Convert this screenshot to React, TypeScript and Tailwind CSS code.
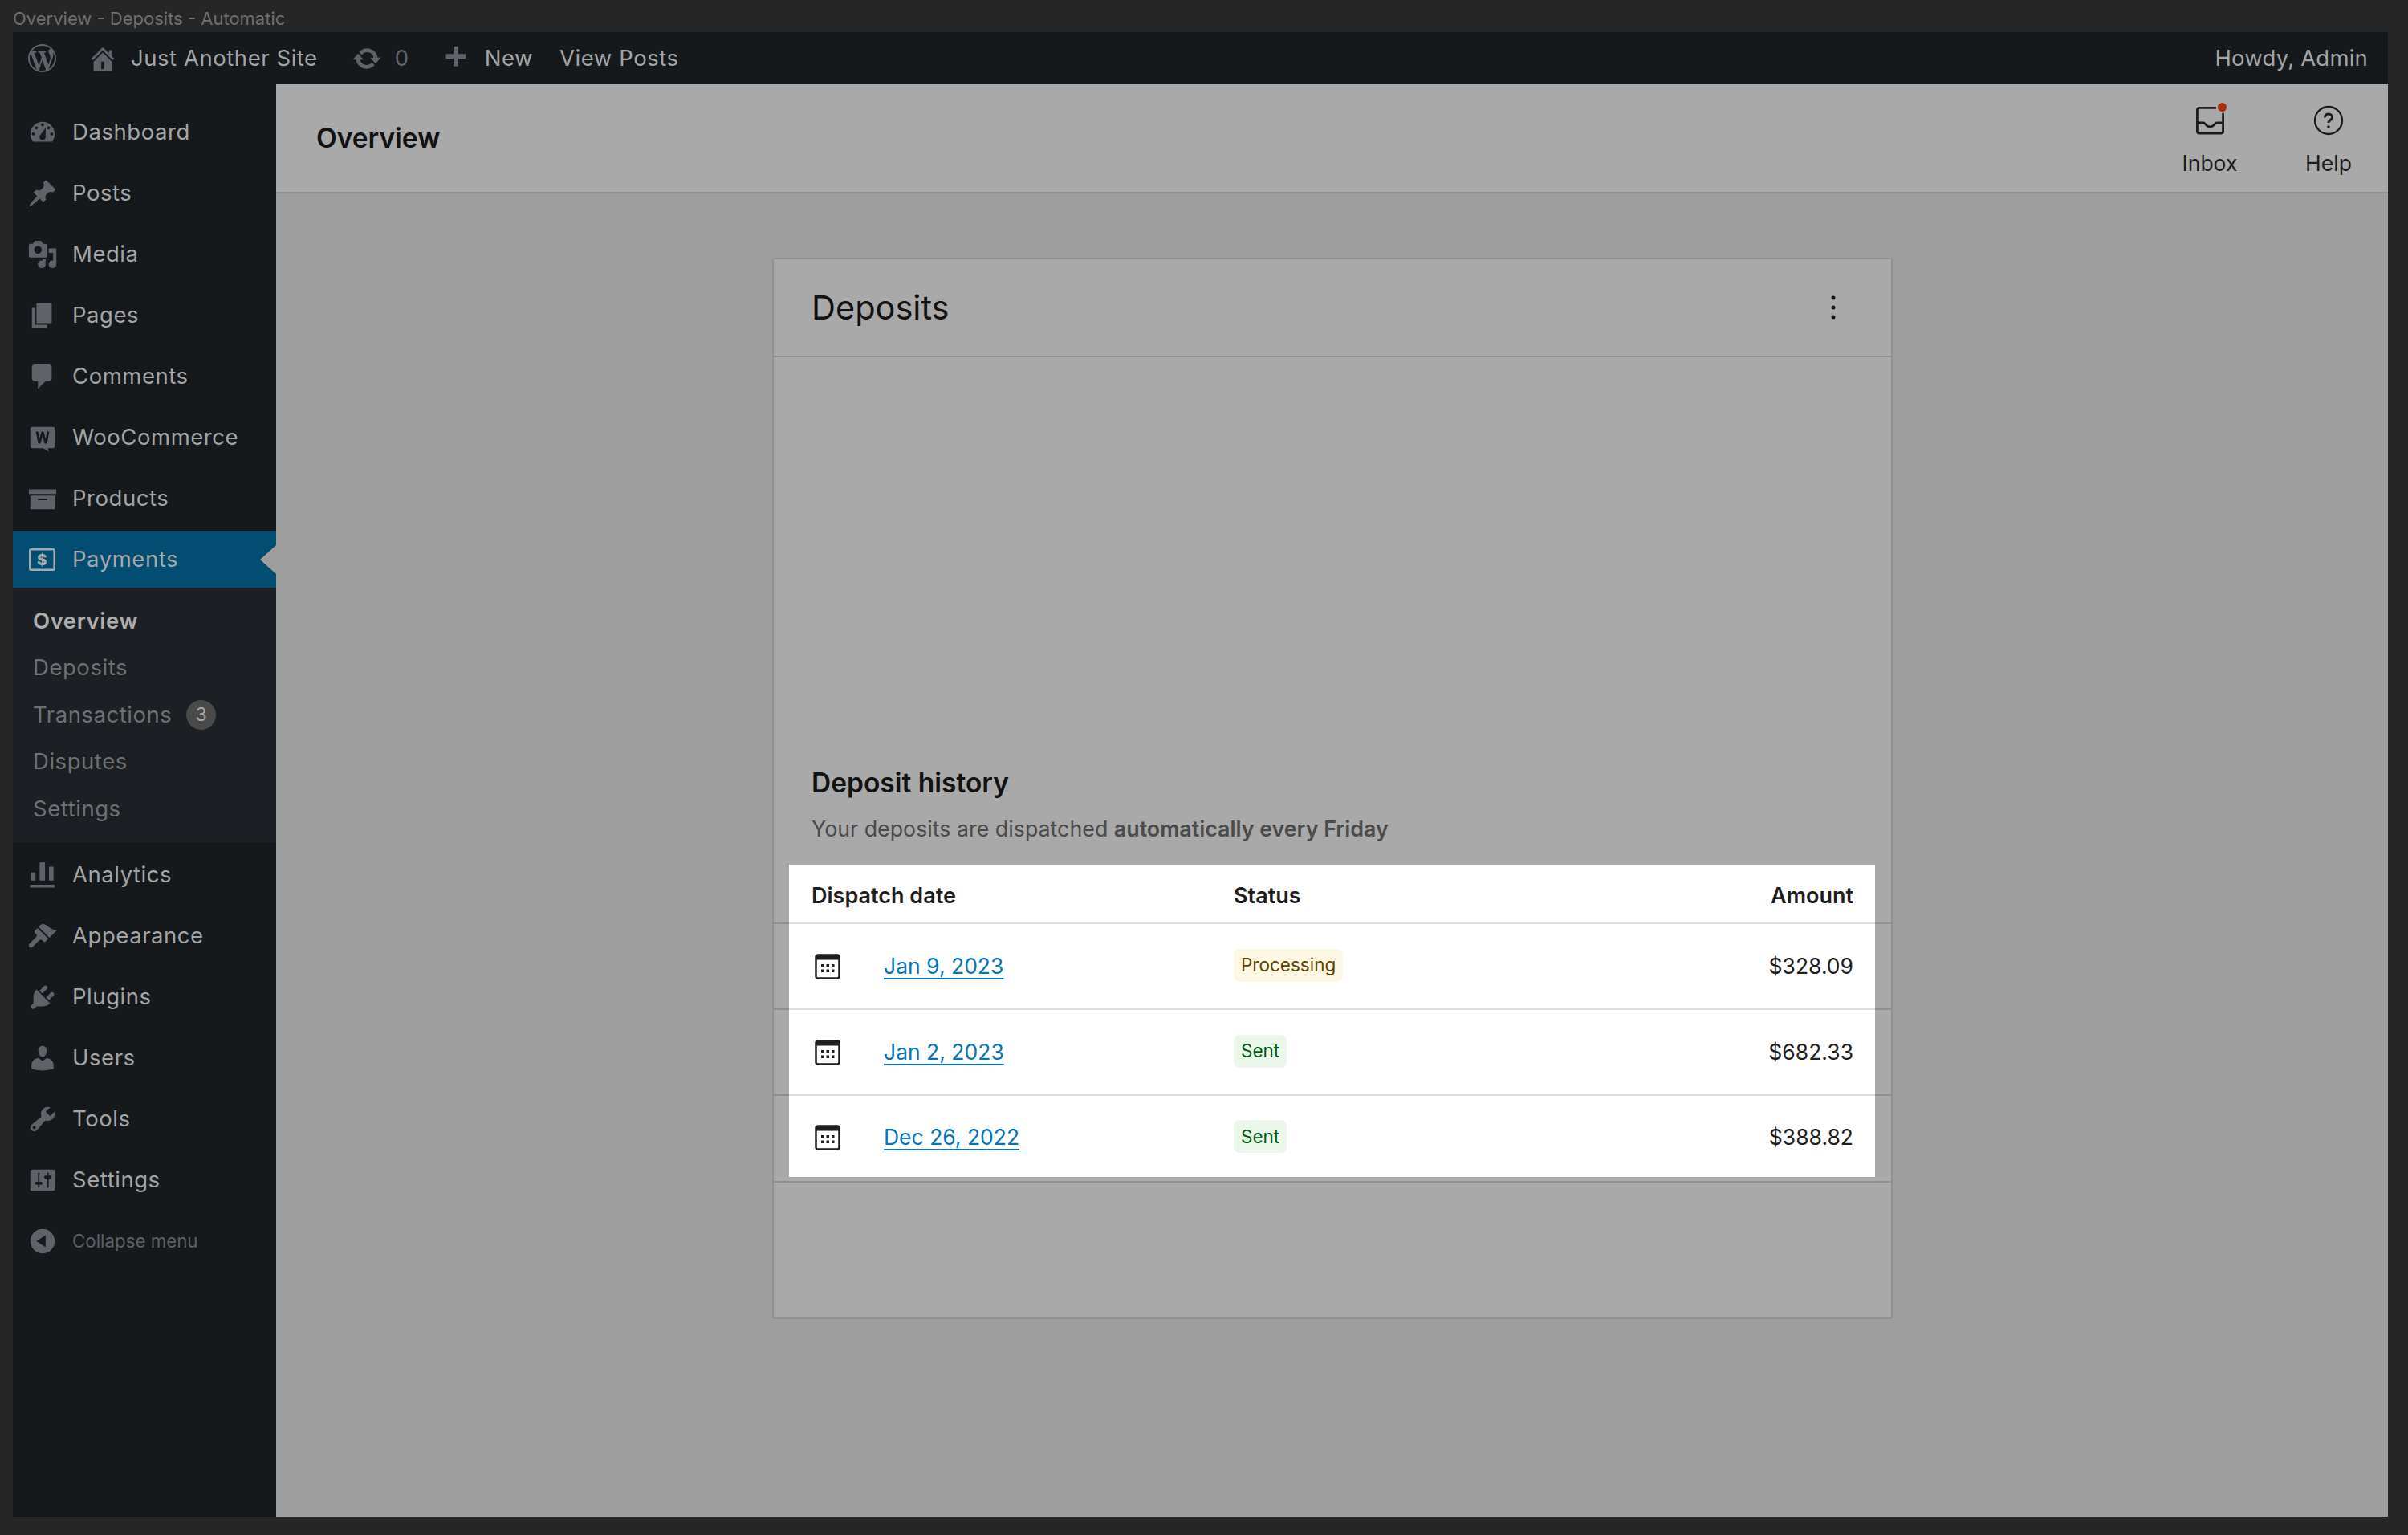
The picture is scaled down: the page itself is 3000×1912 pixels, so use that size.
// WooCommerce Payments · Deposits overview with dimmed wp-admin and spotlighted table
import type { ReactNode } from 'react';

function Dash({ d, className = 'w-[38px] h-[38px]' }: { d: string; className?: string }) {
  return (
    <svg viewBox="0 0 20 20" className={className} fill="currentColor">
      <path d={d} fillRule="evenodd" />
    </svg>
  );
}

const ICONS = {
  wp: 'M20 10c0-5.51-4.49-10-10-10C4.48 0 0 4.49 0 10c0 5.52 4.48 10 10 10 5.51 0 10-4.48 10-10zM7.78 15.37L4.37 6.22c.55-.02 1.17-.08 1.17-.08.5-.06.44-1.13-.06-1.11 0 0-1.45.11-2.37.11-.18 0-.37 0-.58-.01C4.12 2.69 6.87 1.11 10 1.11c2.33 0 4.45.87 6.05 2.34-.68-.11-1.65.39-1.65 1.58 0 .74.45 1.36.9 2.1.35.61.55 1.36.55 2.46 0 1.49-1.4 5-1.4 5l-3.03-8.37c.54-.02.82-.17.82-.17.5-.05.44-1.25-.06-1.22 0 0-1.44.12-2.38.12-.87 0-2.33-.12-2.33-.12-.5-.03-.56 1.2-.06 1.22l.92.08 1.26 3.41zM17.41 10c.24-.64.74-1.87.43-4.25.7 1.29 1.05 2.71 1.05 4.25 0 3.29-1.73 6.24-4.4 7.78.97-2.59 1.94-5.2 2.92-7.78zM6.1 18.09C3.12 16.65 1.11 13.53 1.11 10c0-1.3.23-2.48.72-3.59C3.25 10.3 4.67 14.2 6.1 18.09zm4.03-6.63l2.58 6.98c-.86.29-1.76.45-2.71.45-.79 0-1.57-.11-2.29-.33.81-2.38 1.62-4.74 2.42-7.1z',
  home: 'M16 8.5l1.53 1.53-1.06 1.06L10 4.62l-6.47 6.47-1.06-1.06L10 2.5l4 4v-2h2v4zm-6-2.46l6 5.99V18H4v-5.97zM11 17v-5H9v5h2z',
  update: 'M10.2 3.28c3.53 0 6.43 2.61 6.92 6h2.08l-3.5 4-3.5-4h2.32c-.45-1.97-2.21-3.45-4.32-3.45-1.45 0-2.73.71-3.54 1.78L4.95 5.66C6.23 4.2 8.11 3.28 10.2 3.28zm-.4 13.44c-3.52 0-6.43-2.61-6.92-6H.8l3.5-4c1.17 1.33 2.33 2.67 3.5 4H5.48c.45 1.97 2.21 3.45 4.32 3.45 1.45 0 2.73-.71 3.54-1.78l1.71 1.95c-1.28 1.46-3.15 2.38-5.25 2.38z',
  plus: 'M17 7v3h-5v5H9v-5H4V7h5V2h3v5h5z',
  dashboard: 'M3.76 16h12.48c1.1-1.37 1.76-3.11 1.76-5 0-4.42-3.58-8-8-8s-8 3.58-8 8c0 1.89.66 3.63 1.76 5zM10 4c.55 0 1 .45 1 1s-.45 1-1 1-1-.45-1-1 .45-1 1-1zM6 6c.55 0 1 .45 1 1s-.45 1-1 1-1-.45-1-1 .45-1 1-1zm8 0c.55 0 1 .45 1 1s-.45 1-1 1-1-.45-1-1 .45-1 1-1zm-5.37 5.55L12 7v6c0 1.1-.9 2-2 2s-2-.9-2-2c0-.57.24-1.08.63-1.45zM4 10c.55 0 1 .45 1 1s-.45 1-1 1-1-.45-1-1 .45-1 1-1zm12 0c.55 0 1 .45 1 1s-.45 1-1 1-1-.45-1-1 .45-1 1-1z',
  post: 'M10.44 3.02l1.82-1.82 6.36 6.35-1.83 1.82c-1.05-.68-2.48-.57-3.41.36l-.75.75c-.92.93-1.04 2.35-.35 3.41l-1.83 1.82-2.41-2.41-2.8 2.79c-.42.42-3.38 2.71-3.8 2.29s1.86-3.39 2.28-3.81l2.79-2.79L4.1 9.36l1.83-1.82c1.05.69 2.48.57 3.4-.36l.75-.75c.93-.92 1.05-2.35.36-3.41z',
  media: 'M13 11V4c0-.55-.45-1-1-1h-1.67L9 1H5L3.67 3H2c-.55 0-1 .45-1 1v7c0 .55.45 1 1 1h10c.55 0 1-.45 1-1zM7 4.5c1.38 0 2.5 1.12 2.5 2.5S8.38 9.5 7 9.5 4.5 8.38 4.5 7 5.62 4.5 7 4.5zM14 6h5v10.5c0 1.38-1.12 2.5-2.5 2.5S14 17.88 14 16.5s1.12-2.5 2.5-2.5c.17 0 .34.02.5.05V9h-3V6zm-4 8.05V13h2v3.5c0 1.38-1.12 2.5-2.5 2.5S7 17.88 7 16.5 8.12 14 9.5 14c.17 0 .34.02.5.05z',
  page: 'M6 15V2h10v13H6zm-1 1h8v2H3V5h2v11z',
  comments: 'M5 2h9c1.1 0 2 .9 2 2v7c0 1.1-.9 2-2 2h-2l-5 5v-5H5c-1.1 0-2-.9-2-2V4c0-1.1.9-2 2-2z',
  products: 'M19 4v3H1V4h18zM2 8h16v9H2V8zm5 2v1h6v-1H7z',
  appearance: 'M14.48 11.06L7.41 3.99l1.5-1.5c.5-.56 2.3-.47 3.51.32 1.21.8 1.43 1.28 2.91 2.1 1.18.64 2.45 1.26 4.45.85zm-.71.71L6.7 4.7 4.93 6.47c-.39.39-.39 1.02 0 1.41l1.06 1.06c.39.39.39 1.03 0 1.42l-4.6 4.6c-.59.59-.59 1.54 0 2.12.58.59 1.53.59 2.12 0l4.6-4.6c.39-.39 1.03-.39 1.42 0l1.06 1.06c.39.39 1.02.39 1.41 0z',
  plugins: 'M13.11 4.36L9.87 7.6 8 5.73l3.24-3.24c.35-.34 1.05-.2 1.56.32.52.51.66 1.21.31 1.55zm-8 1.77l.91-1.12 9.01 9.01-1.19.84c-.71.71-2.63 1.16-3.82 1.16H6.14L4.9 17.26c-.59.59-1.54.59-2.12 0-.59-.58-.59-1.53 0-2.12l1.24-1.24v-3.88c0-1.13.4-3.19 1.09-3.89zm7.26 3.97l3.24-3.24c.34-.35 1.04-.21 1.55.31.52.51.66 1.21.31 1.55l-3.24 3.25z',
  users: 'M10 9.25c-2.27 0-2.73-3.44-2.73-3.44C7 4.02 7.82 2 9.97 2c2.16 0 2.98 2.02 2.71 3.81 0 0-.41 3.44-2.68 3.44zm0 2.57L12.72 10c2.39 0 4.52 2.33 4.52 4.53v2.49s-3.65 1.13-7.24 1.13c-3.65 0-7.24-1.13-7.24-1.13v-2.49c0-2.25 1.94-4.48 4.47-4.48z',
  tools: 'M16.68 9.77c-1.34 1.34-3.3 1.67-4.95.99l-5.41 6.52c-.99.99-2.59.99-3.58 0s-.99-2.59 0-3.57l6.52-5.42c-.68-1.65-.35-3.61.99-4.95 1.28-1.28 3.12-1.62 4.72-1.06l-2.89 2.89 2.82 2.82 2.86-2.87c.53 1.58.18 3.39-1.08 4.65zM3.81 16.21c.4.39 1.04.39 1.43 0 .4-.4.4-1.04 0-1.43-.39-.4-1.03-.4-1.43 0-.39.39-.39 1.03 0 1.43z',
  settings: 'M18 16V4c0-.55-.45-1-1-1H3c-.55 0-1 .45-1 1v12c0 .55.45 1 1 1h14c.55 0 1-.45 1-1zM8 11h1c.55 0 1 .45 1 1s-.45 1-1 1H8v1.5c0 .28-.22.5-.5.5s-.5-.22-.5-.5V13H6c-.55 0-1-.45-1-1s.45-1 1-1h1V5.5c0-.28.22-.5.5-.5s.5.22.5.5V11zm5-2h-1c-.55 0-1-.45-1-1s.45-1 1-1h1V5.5c0-.28.22-.5.5-.5s.5.22.5.5V7h1c.55 0 1 .45 1 1s-.45 1-1 1h-1v5.5c0 .28-.22.5-.5.5s-.5-.22-.5-.5V9z',
  analytics: 'M2.600 8.300h2.800v5.300H2.600V8.300zM8.100 1.700h3.500v11.900H8.100V1.700zM14.200 4.500h3v9.100h-3V4.500zM1.900 16.300h16v1.800h-16v-1.800z',
  collapse: 'M10 2a8 8 0 1 1 0 16 8 8 0 0 1 0-16zm2 4l-6 4 6 4V6z',
  woo: 'M3.500 3h13A1.500 1.500 0 0 1 18 4.500v11a1.500 1.500 0 0 1-1.500 1.500h-3l.6 2.200L10.500 17h-7A1.500 1.500 0 0 1 2 15.500v-11A1.500 1.500 0 0 1 3.500 3zM5.600 6l1.500 8h1.500L10 9l1.400 5h1.500l1.500-8h-1.500l-.8 5-1.400-5H9.300L7.900 11l-.8-5H5.600z',
};

const TOP_MENU: [string, string][] = [
  ['Dashboard', ICONS.dashboard],
  ['Posts', ICONS.post],
  ['Media', ICONS.media],
  ['Pages', ICONS.page],
  ['Comments', ICONS.comments],
  ['WooCommerce', ICONS.woo],
  ['Products', ICONS.products],
];

const BOTTOM_MENU: [string, string][] = [
  ['Analytics', ICONS.analytics],
  ['Appearance', ICONS.appearance],
  ['Plugins', ICONS.plugins],
  ['Users', ICONS.users],
  ['Tools', ICONS.tools],
  ['Settings', ICONS.settings],
];

function MenuRow({ label, icon }: { label: string; icon: string }) {
  return (
    <div className="flex h-[76px] items-center pl-[18px] text-[27.5px] tracking-[0.55px] text-[#a3a4a6]">
      <span className="w-[56px] shrink-0 text-[#5f6369]">
        <Dash d={icon} />
      </span>
      {label}
    </div>
  );
}

function SubRow({ children, strong }: { children: ReactNode; strong?: boolean }) {
  return (
    <div
      className={`flex h-[58.5px] items-center pl-[25px] text-[27.5px] tracking-[0.55px] ${
        strong ? 'font-semibold text-[#adadad]' : 'text-[#6d7073]'
      }`}
    >
      {children}
    </div>
  );
}

function Sidebar() {
  return (
    <aside className="w-[328px] shrink-0 bg-[#16191c] pt-[22px]">
      {TOP_MENU.map(([label, icon]) => (
        <MenuRow key={label} label={label} icon={icon} />
      ))}
      <div className="relative mt-[3px] flex h-[70px] items-center bg-[#024d71] pl-[20px] text-[27.5px] tracking-[0.55px] text-[#a3a9ad]">
        <span className="w-[54px] shrink-0">
          <svg viewBox="0 0 33 28" className="h-[28px] w-[33px]" fill="none">
            <rect x="1.300" y="1.300" width="30.400" height="25.400" rx="1.500" stroke="currentColor" strokeWidth="2.600" />
            <text x="16.500" y="20.500" textAnchor="middle" fontSize="19" fontWeight="800" fill="currentColor">
              $
            </text>
          </svg>
        </span>
        Payments
        <span className="absolute right-0 top-[17px] border-y-[18px] border-r-[20px] border-y-transparent border-r-[#9e9e9e]" />
      </div>
      <div className="h-[317px] bg-[#1c2024] pt-[12px]">
        <SubRow strong>Overview</SubRow>
        <SubRow>Deposits</SubRow>
        <SubRow>
          Transactions
          <span className="ml-[18px] flex h-[37px] w-[37px] items-center justify-center rounded-full bg-[#4a4a4a] text-[23px] text-[#a9a9a9]">
            3
          </span>
        </SubRow>
        <SubRow>Disputes</SubRow>
        <SubRow>Settings</SubRow>
      </div>
      <div className="pt-[3px]">
        {BOTTOM_MENU.map(([label, icon]) => (
          <MenuRow key={label} label={label} icon={icon} />
        ))}
        <div className="flex h-[76px] items-center pl-[18px] text-[22.3px] text-[#5c6064]">
          <span className="w-[56px] shrink-0 text-[#5f6369]">
            <Dash d={ICONS.collapse} />
          </span>
          Collapse menu
        </div>
      </div>
    </aside>
  );
}

function AdminBar() {
  return (
    <header className="flex h-[65px] shrink-0 items-center bg-[#16191c] text-[27.5px] tracking-[0.55px] text-[#a3a4a6]">
      <span className="ml-[19px] w-[74px] text-[#5f6369]">
        <Dash d={ICONS.wp} className="h-[35px] w-[35px]" />
      </span>
      <span className="mr-[16px] text-[#5f6369]">
        <Dash d={ICONS.home} />
      </span>
      <span>Just Another Site</span>
      <span className="ml-[42px] text-[#5f6369]">
        <Dash d={ICONS.update} />
      </span>
      <span className="ml-[16px] text-[#5f6369]">0</span>
      <span className="ml-[38px] text-[#5f6369]">
        <Dash d={ICONS.plus} />
      </span>
      <span className="ml-[18px]">New</span>
      <span className="ml-[33px]">View Posts</span>
      <span className="ml-auto mr-[25px] tracking-[0.2px]">Howdy, Admin</span>
    </header>
  );
}

function PageHeader() {
  return (
    <div className="flex h-[136px] shrink-0 items-center border-b-2 border-[#919191] bg-[#a9a9a9] pl-[50px] text-[#1c1c1c]">
      <h1 className="text-[33.5px] font-semibold text-[#121212]">Overview</h1>
      <div className="ml-auto flex self-start">
        <div className="flex w-[148px] flex-col items-center text-[26.5px]">
          <span className="relative mt-[26px] h-[38px] w-[38px]">
            <svg viewBox="0 0 38 38" className="h-[38px] w-[38px]" fill="none" stroke="currentColor" strokeWidth="2.800">
              <path d="M26 3.400H6a2.600 2.600 0 0 0-2.600 2.600v26.400a2.600 2.600 0 0 0 2.600 2.600h27a2.600 2.600 0 0 0 2.600-2.600V11" strokeLinecap="round" />
              <path d="M3.400 22h8c2 0 3 5 8 5s6-5 8-5h8" />
            </svg>
            <span className="absolute left-[28.5px] top-[-3.5px] h-[11px] w-[11px] rounded-full bg-[#a8300d]" />
          </span>
          <span className="mt-[18px] leading-[32px]">Inbox</span>
        </div>
        <div className="flex w-[148px] flex-col items-center text-[26.5px]">
          <svg viewBox="0 0 38 38" className="mt-[26px] h-[38px] w-[38px]" fill="none" stroke="currentColor" strokeWidth="2.400">
            <circle cx="19" cy="19" r="17" />
            <path d="M14.500 15.500c0-3 2-4.500 4.500-4.500s4.500 1.700 4.500 4.200c0 3.300-4.500 3.300-4.500 6.800" strokeWidth="3" />
            <circle cx="19" cy="27" r="1.800" fill="currentColor" stroke="none" />
          </svg>
          <span className="mt-[18px] leading-[32px]">Help</span>
        </div>
      </div>
    </div>
  );
}

function CalendarIcon() {
  return (
    <svg viewBox="0 0 32 32" className="ml-[4px] h-[32px] w-[32px]">
      <rect x="1.500" y="1.500" width="29" height="29" rx="2.500" fill="none" stroke="#1e1e1e" strokeWidth="2.500" />
      <rect x="1.500" y="1.500" width="29" height="6" fill="#1e1e1e" />
      {[8, 14.500, 21].map((x) =>
        [13, 19.500].map((y) => <rect key={`${x}-${y}`} x={x} y={y} width="3.500" height="3.500" fill="#1e1e1e" />),
      )}
    </svg>
  );
}

interface Deposit {
  date: string;
  status: 'Processing' | 'Sent';
  amount: string;
}

const DEPOSITS: Deposit[] = [
  { date: 'Jan 9, 2023', status: 'Processing', amount: '$328.09' },
  { date: 'Jan 2, 2023', status: 'Sent', amount: '$682.33' },
  { date: 'Dec 26, 2022', status: 'Sent', amount: '$388.82' },
];

// 左右两条灰边 + 中间白色高亮区
function TableLine({ children, className }: { children: ReactNode; className: string }) {
  return (
    <div className="flex">
      <div className="w-[19px] border-b-2 border-[#919191]" />
      <div className={`grid flex-1 grid-cols-[526px_1fr_auto] items-center border-b-2 border-[#dcdcdc] bg-white pl-[28px] pr-[27px] ${className}`}>
        {children}
      </div>
      <div className="w-[20px] border-b-2 border-[#919191]" />
    </div>
  );
}

function DepositRow({ deposit }: { deposit: Deposit }) {
  const badge = deposit.status === 'Processing' ? 'bg-[#fdf7e3] text-[#5c4400]' : 'bg-[#ecf7ec] text-[#005c12]';
  return (
    <>
      <div className="flex items-center">
        <CalendarIcon />
        <a className="ml-[54px] text-[26.5px] text-[#0675b8] underline decoration-2 underline-offset-[5px]">{deposit.date}</a>
      </div>
      <div className="mb-[3px]">
        <span className={`inline-flex h-[41px] items-center rounded-[7px] px-[9px] text-[22.5px] ${badge}`}>{deposit.status}</span>
      </div>
      <div className="text-[26.5px] text-[#1e1e1e]">{deposit.amount}</div>
    </>
  );
}

function DepositsCard() {
  return (
    <section className="ml-[618px] h-[1322px] w-[1396px] rounded-[3px] border-2 border-[#919191] bg-[#a9a9a9]">
      <div className="flex h-[122px] items-center justify-between border-b-2 border-[#919191] pl-[47px] pr-[69px]">
        <h2 className="text-[41.5px] text-[#121212]">Deposits</h2>
        <svg viewBox="0 0 6 30" className="h-[30px] w-[6px]" fill="#121212">
          <circle cx="3" cy="3" r="2.500" />
          <circle cx="3" cy="15" r="2.500" />
          <circle cx="3" cy="27" r="2.500" />
        </svg>
      </div>
      <div className="px-[47px] pt-[510px]">
        <h3 className="text-[33.5px] font-semibold leading-[40px] text-[#121212]">Deposit history</h3>
        <p className="mt-[17px] text-[26.8px] leading-[40px] text-[#4b4b4b]">
          Your deposits are dispatched <strong className="font-semibold">automatically every Friday</strong>
        </p>
      </div>
      <div className="mt-[25px]">
        <TableLine className="h-[74px] pt-[7px] text-[27px] font-semibold text-[#1e1e1e]">
          <div>Dispatch date</div>
          <div>Status</div>
          <div>Amount</div>
        </TableLine>
        {DEPOSITS.slice(0, 2).map((d) => (
          <TableLine key={d.date} className="h-[107px]">
            <DepositRow deposit={d} />
          </TableLine>
        ))}
        <div className="border-b-2 border-[#919191] pb-[5px] pl-[19px] pr-[20px]">
          <div className="grid h-[101px] grid-cols-[526px_1fr_auto] items-center bg-white pl-[28px] pr-[27px] pt-[3px]">
            <DepositRow deposit={DEPOSITS[2]} />
          </div>
        </div>
      </div>
    </section>
  );
}

export default function App() {
  return (
    <div className="flex h-[1912px] w-[3000px] flex-col overflow-hidden bg-[#262626] font-[family-name:Inter,sans-serif]">
      <div className="flex h-[40px] shrink-0 items-center pl-[16px] pt-[6px] text-[22px] text-[#6e6e6e]">Overview - Deposits - Automatic</div>
      <div className="ml-[16px] flex h-[1849px] w-[2959px] flex-col">
        <AdminBar />
        <div className="flex min-h-0 flex-1">
          <Sidebar />
          <main className="min-w-0 flex-1 bg-[#9e9e9e]">
            <PageHeader />
            <div className="pt-[80px]">
              <DepositsCard />
            </div>
          </main>
        </div>
      </div>
    </div>
  );
}
